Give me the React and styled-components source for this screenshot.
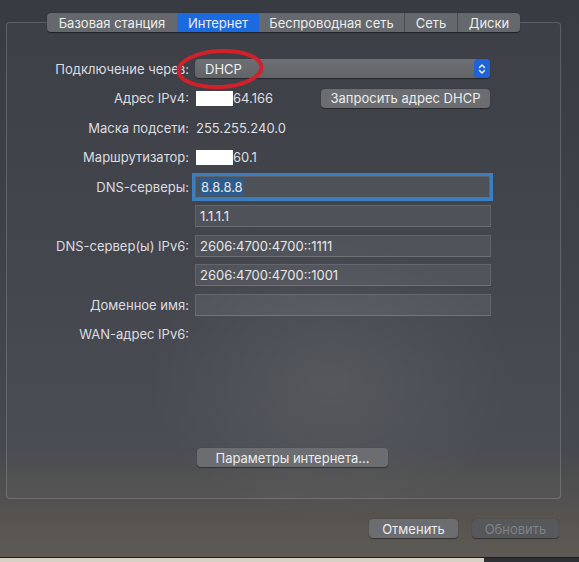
import React from "react";
import styled, { createGlobalStyle } from "styled-components";

const GlobalStyle = createGlobalStyle`
  html, body {
    margin: 0;
    padding: 0;
    background: #383b42;
  }
  #root {
    width: 579px;
    height: 562px;
  }
`;

const Window = styled.div`
  position: relative;
  width: 579px;
  height: 562px;
  box-sizing: border-box;
  padding: 13px 18px 0 6px;
  display: flex;
  flex-direction: column;
  overflow: hidden;
  font-family: Inter, "Liberation Sans", sans-serif;
  font-size: 13px;
  color: #dedfe1;
  background:
    radial-gradient(ellipse 260px 200px at 330px 380px, rgba(255, 255, 255, 0.07), rgba(255, 255, 255, 0) 70%),
    linear-gradient(180deg, #383b42 0%, #3f4249 45%, #474950 80%, #57544f 92%, #5f5a55 100%);
`;

const TabBar = styled.div`
  align-self: center;
  display: flex;
  height: 19px;
  margin-bottom: -10px;
  position: relative;
  z-index: 1;
  border-radius: 4px;
  overflow: hidden;
  background: #65686c;
  box-shadow: 0 0.5px 1px rgba(0, 0, 0, 0.5);
`;

const Tab = styled.div`
  width: ${(p) => p.$w}px;
  display: flex;
  align-items: center;
  justify-content: center;
  color: #eceded;
  background: ${(p) => (p.$active ? "#1b6ae0" : "transparent")};
  border-left: ${(p) => (p.$first || p.$active || p.$afterActive ? "none" : "1px solid #4a4c50")};
  white-space: nowrap;
`;

const Panel = styled.div`
  flex: none;
  height: 477px;
  box-sizing: border-box;
  border: 1px solid rgba(255, 255, 255, 0.17);
  border-radius: 4px;
  background: rgba(255, 255, 255, 0.025);
  display: flex;
  flex-direction: column;
  padding-top: 31px;
`;

const Form = styled.div`
  display: grid;
  grid-template-columns: 182px 296px;
  grid-auto-rows: 29.5px;
  column-gap: 6px;
  align-items: center;
`;

const Label = styled.div`
  text-align: right;
  white-space: nowrap;
  color: #dcdde0;
`;

const Value = styled.div`
  display: flex;
  align-items: center;
  justify-content: space-between;
  padding-left: 1px;
  white-space: nowrap;
`;

const Redacted = styled.span`
  display: inline-block;
  width: 37px;
  height: 15px;
  background: #ffffff;
  vertical-align: middle;
  margin-top: -2px;
`;

const Popup = styled.div`
  height: 19px;
  display: flex;
  align-items: center;
  justify-content: space-between;
  border-radius: 4px;
  background: linear-gradient(180deg, #6d6f73, #626468);
  box-shadow: 0 0.5px 1px rgba(0, 0, 0, 0.45);
  padding-left: 10px;
  margin-right: 1px;
  color: #f0f0f0;
`;

const Stepper = styled.div`
  width: 16px;
  height: 19px;
  border-radius: 4px;
  background: #1f63d6;
  display: flex;
  align-items: center;
  justify-content: center;
`;

const Field = styled.div`
  height: 22px;
  box-sizing: border-box;
  display: flex;
  align-items: center;
  padding: 0 4px;
  background: rgba(255, 255, 255, 0.075);
  border: 1px solid rgba(255, 255, 255, 0.1);
  border-bottom-color: rgba(255, 255, 255, 0.16);
  color: #e6e7e8;
  box-shadow: ${(p) => (p.$focused ? "0 0 0 3px #3b7fc0" : "none")};
  margin-right: ${(p) => (p.$focused ? "1px" : "0")};
`;

const Selection = styled.span`
  background: #2e5c8e;
  padding: 1px 1px;
`;

const Button = styled.button`
  height: 19px;
  border: none;
  border-radius: 4px;
  font: inherit;
  color: ${(p) => (p.$disabled ? "#808285" : "#ececec")};
  background: ${(p) => (p.$disabled ? "#56585c" : "#6b6d71")};
  box-shadow: 0 0.5px 1px rgba(0, 0, 0, 0.4);
  padding: 0;
  width: ${(p) => p.$w}px;
  white-space: nowrap;
`;

const ActionRow = styled.div`
  margin-top: 99px;
  padding-left: 190px;
  display: flex;
`;

const Footer = styled.div`
  display: flex;
  justify-content: flex-end;
  gap: 14px;
  margin-top: 20px;
  padding-right: 2px;
`;

const Spacer = styled.div`
  flex: 1;
`;

const Strip = styled.div`
  height: 4px;
  margin: 0 -18px 0 -6px;
  border-top: 1px solid #1c1c1e;
  background: linear-gradient(90deg, #d6d0c5 0, #d6d0c5 484px, #2e3034 484px);
`;

const Annotation = styled.svg`
  position: absolute;
  left: 174px;
  top: 47px;
  pointer-events: none;
`;

const tabs = [
  { name: "Базовая станция", w: 130 },
  { name: "Интернет", w: 82, active: true },
  { name: "Беспроводная сеть", w: 145 },
  { name: "Сеть", w: 52 },
  { name: "Диски", w: 62 },
];

export default function App() {
  return (
    <Window>
      <GlobalStyle />
      <TabBar>
        {tabs.map((t, i) => (
          <Tab
            key={t.name}
            $w={t.w}
            $active={t.active}
            $first={i === 0}
            $afterActive={i > 0 && tabs[i - 1].active}
          >
            {t.name}
          </Tab>
        ))}
      </TabBar>
      <Panel>
        <Form>
          <Label>Подключение через:</Label>
          <Popup>
            DHCP
            <Stepper>
              <svg width="8" height="12" viewBox="0 0 8 12">
                <path d="M1.5 4.5 L4 2 L6.5 4.5 M1.5 7.5 L4 10 L6.5 7.5" fill="none" stroke="#fff" strokeWidth="1.3" strokeLinecap="round" strokeLinejoin="round" />
              </svg>
            </Stepper>
          </Popup>

          <Label>Адрес IPv4:</Label>
          <Value>
            <span>
              <Redacted />64.166
            </span>
            <Button $w={169} style={{ marginRight: 1 }}>Запросить адрес DHCP</Button>
          </Value>

          <Label>Маска подсети:</Label>
          <Value>255.255.240.0</Value>

          <Label>Маршрутизатор:</Label>
          <Value>
            <span>
              <Redacted />60.1
            </span>
          </Value>

          <Label>DNS-серверы:</Label>
          <Field $focused>
            <Selection>8.8.8.8</Selection>
          </Field>

          <span />
          <Field>1.1.1.1</Field>

          <Label>DNS-сервер(ы) IPv6:</Label>
          <Field>2606:4700:4700::1111</Field>

          <span />
          <Field>2606:4700:4700::1001</Field>

          <Label>Доменное имя:</Label>
          <Field />

          <Label>WAN-адрес IPv6:</Label>
          <span />
        </Form>
        <ActionRow>
          <Button $w={191}>Параметры интернета...</Button>
        </ActionRow>
      </Panel>
      <Footer>
        <Button $w={89}>Отменить</Button>
        <Button $w={87} $disabled>Обновить</Button>
      </Footer>
      <Spacer />
      <Strip />
      <Annotation width="92" height="44" viewBox="0 0 92 44">
        <ellipse cx="46" cy="22" rx="41.5" ry="18" fill="none" stroke="#d3202b" strokeWidth="4" transform="rotate(-3 46 22)" />
      </Annotation>
    </Window>
  );
}
